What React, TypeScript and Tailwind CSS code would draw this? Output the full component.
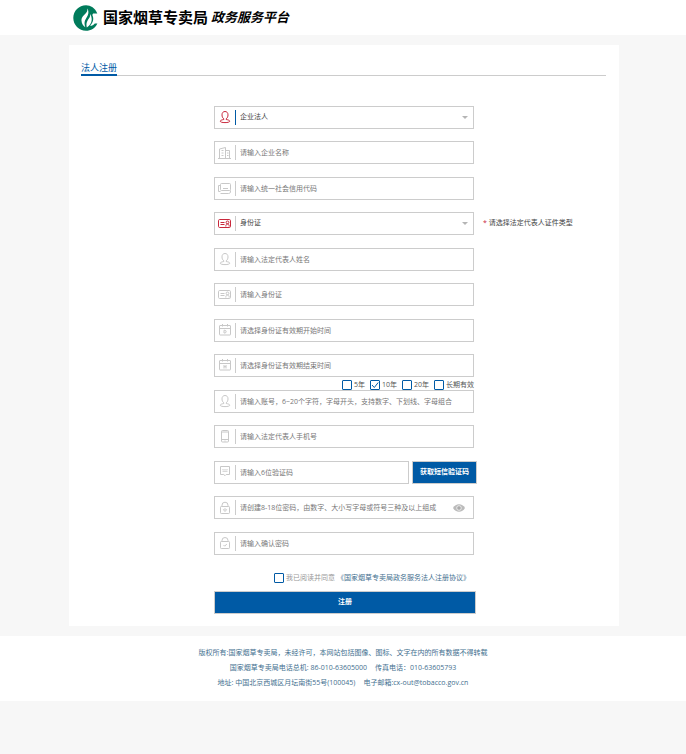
import type { ReactNode } from 'react'
import { useState } from 'react'

const PersonIcon = () => (
  <>
    <path d="M5.800 8.800C4.600 8 4 6.600 4 4.900 4 2.700 5.200 1.500 7 1.500s3 1.200 3 3.400c0 1.700-.6 3.100-1.800 3.900" />
    <path d="M5.800 8.800v.7C3.600 9.900 2.300 10.400 2.300 11.200c0 .9 1.900 1.400 4.700 1.400s4.700-.5 4.700-1.400c0-.8-1.300-1.300-3.500-1.700v-.7" />
  </>
)

const CompanyIcon = () => (
  <path d="M1.500 13.500v-9.500l6-1.500v11M7.500 5.500h4v8M0 13.500h13M3.500 5.500h2M3.500 8h2M3.500 10.500h2M9 8h1.500M9 10.500h1.500" />
)

const CodeIcon = () => (
  <>
    <rect x="2.500" y="2.500" width="10" height="7" rx="1" />
    <path d="M2.500 4.500H.5v6h2M5 7.500h5M2.500 12.500h8c1.500 0 2-.5 2-3" />
  </>
)

const IdCardIcon = () => (
  <>
    <rect x=".5" y="3.500" width="12" height="8" rx="1.200" />
    <path d="M2.500 6.500h4M2.500 8.500h4M7.800 10.500c0-1.400.5-2.500 1.700-2.500s1.700 1.100 1.700 2.500" />
    <circle cx="9.500" cy="6.400" r="1.400" />
  </>
)

const CalendarStartIcon = () => (
  <>
    <rect x="1.500" y="2.500" width="11" height="9.500" rx=".5" />
    <path d="M1.500 5.500h11M4.500 1v2.500M9.500 1v2.500" />
    <path d="M6 7.300h.8c1.800 0 1.800 2.700 0 2.700H6z" />
  </>
)

const CalendarEndIcon = () => (
  <>
    <rect x="1.500" y="2.500" width="11" height="9.500" rx=".5" />
    <path d="M1.500 5.500h11M4.500 1v2.500M9.500 1v2.500M6 7v3.500M8 7v3.500M6 8.700h2" />
  </>
)

const PhoneIcon = () => (
  <>
    <rect x="3.500" y="1.500" width="7" height="11.500" rx="1" />
    <path d="M3.500 3h7M3.500 10.500h7M6.500 12h1" />
  </>
)

const MessageIcon = () => (
  <>
    <path d="M2.500 1.500h9v8H8.200L7 10.700 5.800 9.500H2.500z" />
    <path d="M4.500 4.500h1M6.500 4.500h1M8.500 4.500h1M4.500 6.200h5" />
  </>
)

const LockHeartIcon = () => (
  <>
    <rect x="2.500" y="6.500" width="9" height="7" rx=".8" />
    <path d="M4 6.500V5.200a3 3 0 0 1 6 0v1.300" />
    <path d="M7 11.500 5.500 9.800l.7-.9.8.5.8-.5.7.9z" />
  </>
)

const LockCheckIcon = () => (
  <>
    <rect x="2.500" y="5.500" width="9" height="7" rx=".8" />
    <path d="M4 5.500V4.500a3 3 0 0 1 6 0v1M5.500 9l1.200 1.200L8.800 8" />
  </>
)

const inputClass =
  'h-full min-w-0 flex-1 bg-transparent px-1 text-[7px] text-[#444] outline-none placeholder:text-[#777]'

type FieldProps = {
  id: string
  label: string
  icon: ReactNode
  tone?: 'gray' | 'red'
  activeBar?: boolean
  className?: string
  children: ReactNode
}

function Field({ id, label, icon, tone = 'gray', activeBar, className = 'w-[260px]', children }: FieldProps) {
  return (
    <div className={`flex h-[23px] items-center border border-[#ccc] pl-[3px] ${className}`}>
      <label htmlFor={id} aria-label={label} className="flex">
        <svg
          viewBox="0 0 15 15"
          fill="none"
          className={`size-[15px] ${tone === 'red' ? 'stroke-[#c9283c]' : 'stroke-[#c8c8c8]'}`}
        >
          {icon}
        </svg>
      </label>
      <span className={`ml-0.5 h-[15px] w-px ${activeBar ? 'bg-[#005aa5]' : 'bg-[#ccc]'}`} />
      {children}
    </div>
  )
}

function TextField({ id, label, icon, type = 'text' }: { id: string; label: string; icon: ReactNode; type?: string }) {
  return (
    <Field id={id} label={label} icon={icon}>
      <input id={id} type={type} placeholder={label} className={inputClass} />
    </Field>
  )
}

function SelectField({ id, label, icon, options, activeBar }: {
  id: string
  label: string
  icon: ReactNode
  options: string[]
  activeBar?: boolean
}) {
  return (
    <Field id={id} label={label} icon={icon} tone="red" activeBar={activeBar}>
      <select id={id} className={`${inputClass} appearance-none`}>
        {options.map((o) => (
          <option key={o}>{o}</option>
        ))}
      </select>
      <svg viewBox="0 0 6 3" className="pointer-events-none mr-[5px] h-[3px] w-1.5 fill-[#b5b5b5]">
        <path d="M0 0h6L3 3z" />
      </svg>
    </Field>
  )
}

function CheckBox({ checked, onChange }: { checked: boolean; onChange: () => void }) {
  return (
    <span className="grid size-2.5 shrink-0">
      <input
        type="checkbox"
        checked={checked}
        onChange={onChange}
        className="col-start-1 row-start-1 size-2.5 appearance-none rounded-[1px] border border-[#005aa5] bg-white"
      />
      {checked && (
        <svg viewBox="0 0 10 10" className="pointer-events-none col-start-1 row-start-1 size-2.5 fill-none stroke-[#005aa5]">
          <path d="M2 5l2.300 2.500L8.200 2.500" />
        </svg>
      )}
    </span>
  )
}

const periods = ['5年', '10年', '20年', '长期有效']

function Logo() {
  return (
    <svg viewBox="0 0 26 26" className="size-[26px]">
      <path
        fill="#007b5b"
        d="M24.300 8.500C22 3 17.800.3 13 .3 6 .3.300 6 .3 13S6 25.700 13 25.700c5 0 9-2.500 11.400-7.300h-2.600c-1.300 1.600-3 2.400-4.700 2.300 3-3 4-6.800 2.400-10.200-.2-.8.1-1.500.6-2z"
      />
      <path
        fill="#fff"
        d="M14.300 3.500c.5 3-1 4.300-2.700 6-2.600 2.300-3.800 4.600-2.800 7.900.6 2.200 1.800 3.600 3.500 4.800-.9-2.500-1-4.600-.3-6.600.8-2.600 2.800-4.300 3.300-7.200.3-1.800-.1-3.500-1-4.900z"
      />
      <path fill="#fff" d="M17.300 9c.2 3-1.600 4.500-2.700 6.500-1.300 2.200-1.400 4.300-.8 7 2.800-1.500 4.700-4.200 4.900-7.400.1-2.200-.4-4.200-1.400-6.100z" />
    </svg>
  )
}

export default function App() {
  const [period, setPeriod] = useState('10年')
  const [agreed, setAgreed] = useState(false)

  return (
    <div className="min-h-screen bg-[#f7f7f7] font-['Open_Sans','Noto_Sans_CJK_SC',sans-serif] text-[7px] text-[#666]">
      <header className="bg-white pl-0.5">
        <div className="mx-auto flex h-[35px] max-w-[550px] items-center pl-1 text-black">
          <Logo />
          <h1 className="ml-1 flex items-center gap-[3px] font-bold">
            <span className="text-[15px]">国家烟草专卖局</span>
            <span className="text-[13px] italic">政务服务平台</span>
          </h1>
        </div>
      </header>

      <main className="py-2.5 pl-0.5">
        <section className="mx-auto max-w-[550px] bg-white pt-4 pr-[13px] pb-3 pl-3">
          <div className="flex h-[15px] border-b border-[#ccc]">
            <h2 className="h-[15px] border-b-2 border-[#005aa5] text-[9px] leading-[13px] text-[#005aa5]">法人注册</h2>
          </div>

          <form className="mx-auto mt-[30px] w-[265px] pl-[3px]" onSubmit={(e) => e.preventDefault()}>
            <div className="flex flex-col gap-3">
              <SelectField id="kind" label="注册类型" icon={<PersonIcon />} options={['企业法人']} activeBar />
              <TextField id="company" label="请输入企业名称" icon={<CompanyIcon />} />
            </div>
            <div className="mt-[13px] flex flex-col gap-3">
              <TextField id="credit" label="请输入统一社会信用代码" icon={<CodeIcon />} />
              <div className="flex items-center">
                <SelectField id="idType" label="证件类型" icon={<IdCardIcon />} options={['身份证']} />
                <p className="-mr-28 ml-[9px] whitespace-nowrap text-[#444]">
                  <span className="text-[#c9283c]">*</span> 请选择法定代表人证件类型
                </p>
              </div>
            </div>
            <div className="mt-[13px] flex flex-col gap-3">
              <TextField id="name" label="请输入法定代表人姓名" icon={<PersonIcon />} />
              <TextField id="idNumber" label="请输入身份证" icon={<IdCardIcon />} />
            </div>
            <div className="mt-[13px] flex flex-col gap-3">
              <TextField id="start" label="请选择身份证有效期开始时间" icon={<CalendarStartIcon />} />
              <TextField id="end" label="请选择身份证有效期结束时间" icon={<CalendarEndIcon />} />
            </div>
            <div className="flex h-[13px] w-[260px] items-end justify-end gap-[5px] text-[#555]">
              {periods.map((p) => (
                <label key={p} className="flex items-center gap-0.5 leading-[10px]">
                  <CheckBox checked={period === p} onChange={() => setPeriod(p)} />
                  {p}
                </label>
              ))}
            </div>
            <div className="flex flex-col gap-3">
              <TextField
                id="account"
                label="请输入账号，6~20个字符，字母开头，支持数字、下划线、字母组合"
                icon={<PersonIcon />}
              />
              <TextField id="mobile" label="请输入法定代表人手机号" icon={<PhoneIcon />} type="tel" />
            </div>
            <div className="mt-[13px] flex flex-col gap-3">
              <div className="flex gap-[3px]">
                <Field id="sms" label="验证码" icon={<MessageIcon />} className="w-[195px]">
                  <input id="sms" placeholder="请输入6位验证码" className={inputClass} />
                </Field>
                <button type="button" className="-mr-px h-[23px] flex-1 border border-[#ccc] bg-[#005aa5] font-bold text-white">
                  获取短信验证码
                </button>
              </div>
              <Field id="password" label="密码" icon={<LockHeartIcon />}>
                <input
                  id="password"
                  type="password"
                  placeholder="请创建8-18位密码，由数字、大小写字母或符号三种及以上组成"
                  className={inputClass}
                />
                <button type="button" aria-label="显示密码" className="mr-2">
                  <svg viewBox="0 0 12 8" className="h-2 w-3">
                    <path fill="#bbb" d="M0 4C1.500 1.500 3.500.3 6 .3S10.500 1.500 12 4C10.500 6.500 8.500 7.700 6 7.700S1.500 6.500 0 4z" />
                    <circle cx="6" cy="4" r="2.300" fill="#aaa" stroke="#fff" strokeWidth=".7" />
                  </svg>
                </button>
              </Field>
            </div>
            <div className="mt-[13px]">
              <TextField id="confirm" label="请输入确认密码" icon={<LockCheckIcon />} type="password" />
            </div>

            <div className="mt-[18px] flex h-2.5 items-center gap-0.5 pl-[60px] leading-[10px] whitespace-nowrap">
              <label className="flex items-center gap-0.5 text-[#999]">
                <CheckBox checked={agreed} onChange={() => setAgreed(!agreed)} />
                我已阅读并同意
              </label>
              <a href="#agreement" className="text-[#44708f]">
                《国家烟草专卖局政务服务法人注册协议》
              </a>
            </div>
            <button type="submit" className="mt-2 h-[23px] w-full border border-[#ccc] bg-[#005aa5] font-bold text-white">
              注册
            </button>
          </form>
        </section>
      </main>

      <footer className="bg-white pt-[9px] pb-[11px] text-center leading-[15px] text-[#44708f]">
        <p>版权所有:国家烟草专卖局，未经许可，本网站包括图像、图标、文字在内的所有数据不得转载</p>
        <p>
          国家烟草专卖局电话总机: 86-010-63605000<span className="ml-2">传真电话：010-63605793</span>
        </p>
        <p>
          地址: 中国北京西城区月坛南街55号(100045)<span className="ml-2">电子邮箱:cx-out@tobacco.gov.cn</span>
        </p>
      </footer>
    </div>
  )
}
